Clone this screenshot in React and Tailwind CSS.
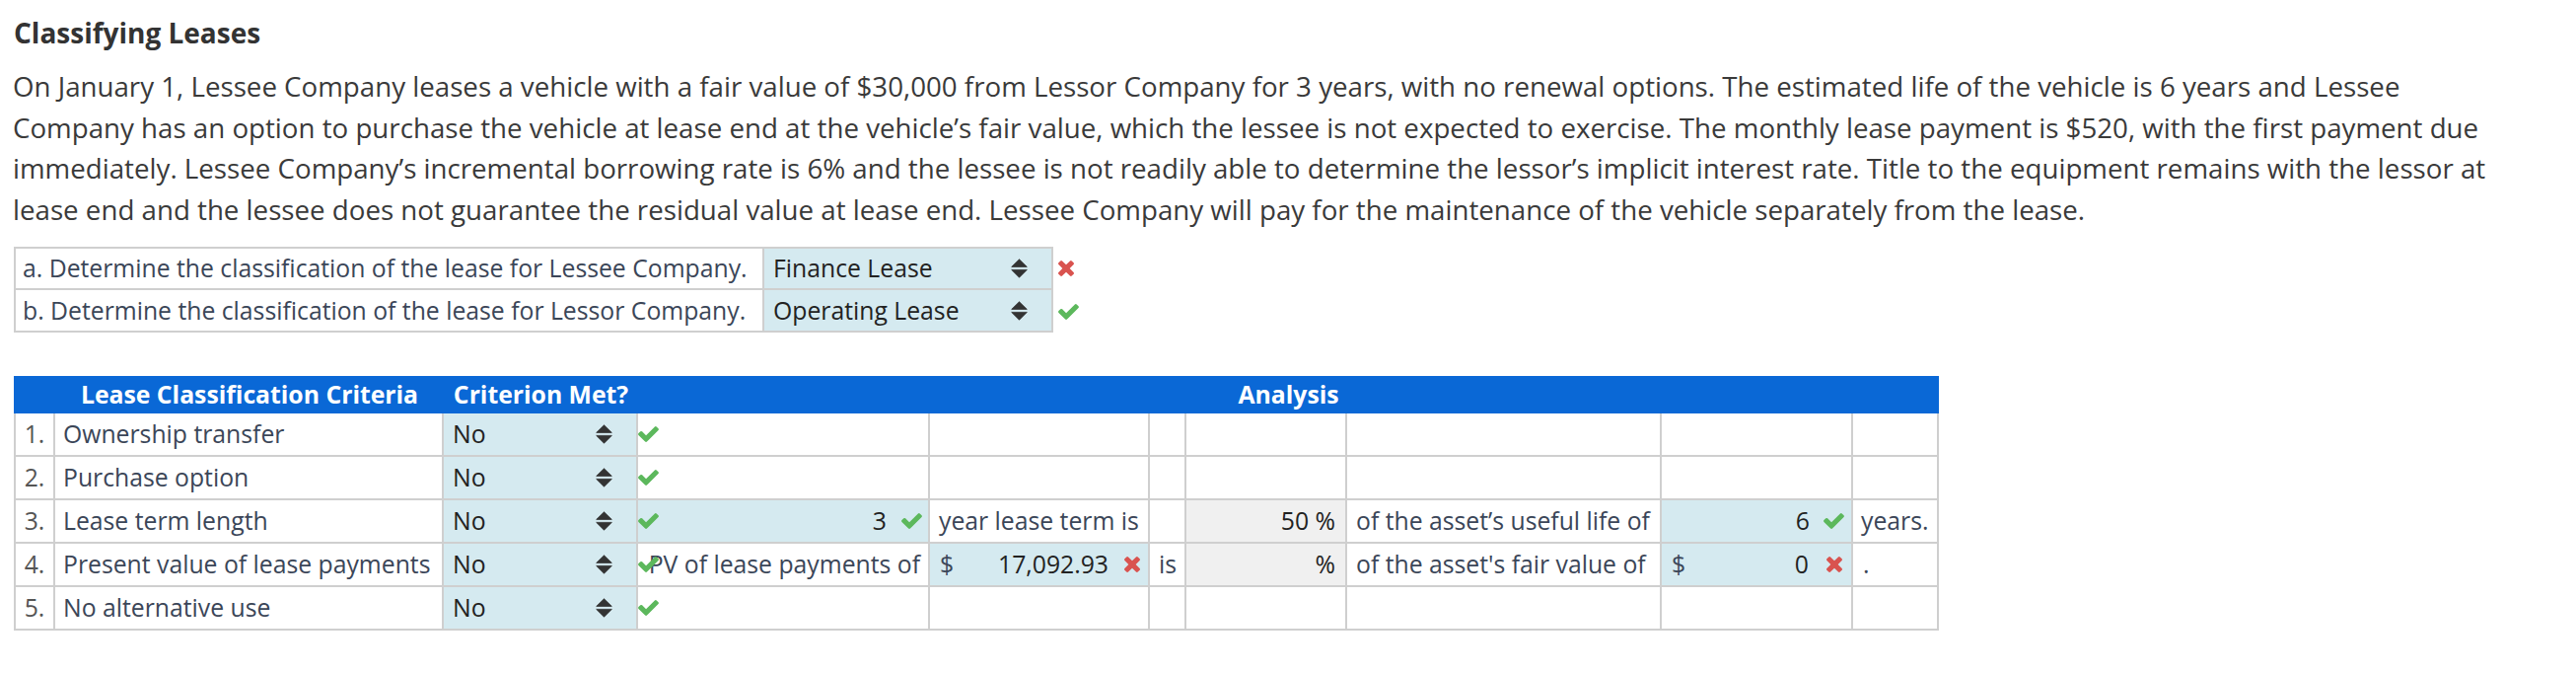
import React from "react";

// FontAwesome-style glyphs drawn inline
function SortIcon() {
  return (
    <svg width="17" height="20" viewBox="0 0 17 20" className="shrink-0">
      <path
        d="M8.5 0.8 L16.3 8.4 H0.7 Z M0.7 11.4 H16.3 L8.5 19.2 Z"
        fill="#333333"
        stroke="#333333"
        strokeWidth="0.8"
        strokeLinejoin="round"
      />
    </svg>
  );
}

function Check({ className = "" }) {
  return (
    <svg width="21" height="16" viewBox="121 334 1550 1188" className={className}>
      <path
        d="M1671 566q0 40-28 68l-724 724-136 136q-28 28-68 28t-68-28l-136-136-362-362q-28-28-28-68t28-68l136-136q28-28 68-28t68 28l294 295 656-657q28-28 68-28t68 28l136 136q28 28 28 68z"
        fill="#5cb85c"
      />
    </svg>
  );
}

function Cross({ className = "" }) {
  return (
    <svg width="16" height="16" viewBox="110 366 1188 1188" className={className}>
      <path
        d="M1298 1322q0 40-28 68l-136 136q-28 28-68 28t-68-28l-294-294-294 294q-28 28-68 28t-68-28l-136-136q-28-28-28-68t28-68l294-294-294-294q-28-28-28-68t28-68l136-136q28-28 68-28t68 28l294 294 294-294q28-28 68-28t68 28l136 136q28 28 28 68t-28 68l-294 294 294 294q28 28 28 68z"
        fill="#d9534f"
      />
    </svg>
  );
}

const td = "border-r-2 border-b-2 border-[#cfcfcf] h-[44px] p-0 align-middle";
const tdFirst = "border-l-2 border-r-2 border-b-2 border-[#cfcfcf] h-[44px] p-0 align-middle text-center text-[#555]";
const label = "text-[#3b4658]";

function SelectCell({ value }) {
  return (
    <td className={td + " relative bg-[#d5eaf0]"}>
      <div className="flex items-center justify-between pl-[9px] pr-[24px] text-[#222]">
        <span>{value}</span>
        <SortIcon />
      </div>
      <Check className="absolute left-[calc(100%+2px)] top-[13px]" />
    </td>
  );
}

function ABRow({ q, answer, ok }) {
  return (
    <tr>
      <td className={"border-l-2 border-r-2 border-b-2 border-[#cfcfcf] h-[43px] pl-[7px] " + label}>{q}</td>
      <td className="border-r-2 border-b-2 border-[#cfcfcf] bg-[#d5eaf0] h-[43px] p-0">
        <div className="flex items-center justify-between pl-[9px] pr-[24px] text-[#222]">
          <span>{answer}</span>
          <SortIcon />
        </div>
      </td>
      <td className="pl-[5px] align-middle">{ok ? <Check /> : <Cross />}</td>
    </tr>
  );
}

export default function App() {
  return (
    <div className="min-h-screen bg-white px-[14px] pt-[14px] font-['Open_Sans',sans-serif] text-[24.75px] text-[#3a3a3a]">
      <h1 className="font-bold text-[28px] leading-[38px] text-[#333]">Classifying Leases</h1>

      <p className="mt-[15px] w-[2542px] text-[27.7px] leading-[41.5px] -ml-[1px]">
        On January 1, Lessee Company leases a vehicle with a fair value of $30,000 from Lessor Company for 3 years, with
        no renewal options. The estimated life of the vehicle is 6 years and Lessee Company has an option to purchase the
        vehicle at lease end at the vehicle’s fair value, which the lessee is not expected to exercise. The monthly lease
        payment is $520, with the first payment due immediately. Lessee Company’s incremental borrowing rate is 6% and the
        lessee is not readily able to determine the lessor’s implicit interest rate. Title to the equipment remains with
        the lessor at lease end and the lessee does not guarantee the residual value at lease end. Lessee Company will pay
        for the maintenance of the vehicle separately from the lease.
      </p>

      <table className="mt-[17px] border-separate border-spacing-0 table-fixed">
        <colgroup>
          <col className="w-[761px]" />
          <col className="w-[293px]" />
          <col className="w-[40px]" />
        </colgroup>
        <tbody>
          <tr>
            <td className={"border-l-2 border-r-2 border-t-2 border-b-2 border-[#cfcfcf] h-[44px] pl-[7px] " + label}>
              a. Determine the classification of the lease for Lessee Company.
            </td>
            <td className="border-r-2 border-t-2 border-b-2 border-[#cfcfcf] bg-[#d5eaf0] h-[44px] p-0">
              <div className="flex items-center justify-between pl-[9px] pr-[24px] text-[#222]">
                <span>Finance Lease</span>
                <SortIcon />
              </div>
            </td>
            <td className="pl-[5px] align-middle">
              <Cross />
            </td>
          </tr>
          <ABRow q="b. Determine the classification of the lease for Lessor Company." answer="Operating Lease" ok />
        </tbody>
      </table>

      <table className="mt-[44px] border-separate border-spacing-0 table-fixed w-[1952px]">
        <colgroup>
          <col className="w-[42px]" />
          <col className="w-[394px]" />
          <col className="w-[197px]" />
          <col className="w-[296px]" />
          <col className="w-[223px]" />
          <col className="w-[37px]" />
          <col className="w-[163px]" />
          <col className="w-[319px]" />
          <col className="w-[194px]" />
          <col className="w-[87px]" />
        </colgroup>
        <thead>
          <tr className="bg-[#0a68d6] text-white font-bold">
            <th className="h-[38px] p-0"></th>
            <th className="h-[38px] p-0 text-center">Lease Classification Criteria</th>
            <th className="h-[38px] p-0 text-center">Criterion Met?</th>
            <th colSpan={7} className="h-[38px] p-0 text-center">
              Analysis
            </th>
          </tr>
        </thead>
        <tbody>
          <tr>
            <td className={tdFirst}>1.</td>
            <td className={td + " pl-[8px] " + label}>Ownership transfer</td>
            <SelectCell value="No" />
            <td className={td}></td>
            <td className={td}></td>
            <td className={td}></td>
            <td className={td}></td>
            <td className={td}></td>
            <td className={td}></td>
            <td className={td}></td>
          </tr>
          <tr>
            <td className={tdFirst}>2.</td>
            <td className={td + " pl-[8px] " + label}>Purchase option</td>
            <SelectCell value="No" />
            <td className={td}></td>
            <td className={td}></td>
            <td className={td}></td>
            <td className={td}></td>
            <td className={td}></td>
            <td className={td}></td>
            <td className={td}></td>
          </tr>
          <tr>
            <td className={tdFirst}>3.</td>
            <td className={td + " pl-[8px] " + label}>Lease term length</td>
            <SelectCell value="No" />
            <td className={td + " bg-[#d5eaf0]"}>
              <div className="flex items-center justify-end gap-[15px] pr-[6px] text-[#222]">
                <span>3</span>
                <Check />
              </div>
            </td>
            <td className={td + " pl-[9px] whitespace-nowrap " + label}>year lease term is</td>
            <td className={td}></td>
            <td className={td + " bg-[#f0f0f0] text-right pr-[10px] text-[#222]"}>50 %</td>
            <td className={td + " pl-[9px] whitespace-nowrap " + label}>of the asset’s useful life of</td>
            <td className={td + " bg-[#d5eaf0]"}>
              <div className="flex items-center justify-end gap-[14px] pr-[7px] text-[#222]">
                <span>6</span>
                <Check />
              </div>
            </td>
            <td className={td + " pl-[8px] whitespace-nowrap " + label}>years.</td>
          </tr>
          <tr>
            <td className={tdFirst}>4.</td>
            <td className={td + " pl-[8px] whitespace-nowrap " + label}>Present value of lease payments</td>
            <SelectCell value="No" />
            <td className={td + " text-right pr-[8px] whitespace-nowrap " + label}>PV of lease payments of</td>
            <td className={td + " bg-[#d5eaf0]"}>
              <div className="flex items-center pl-[10px] pr-[8px] text-[#222]">
                <span className="text-[#3b4658]">$</span>
                <span className="ml-auto">17,092.93</span>
                <Cross className="ml-[16px]" />
              </div>
            </td>
            <td className={td + " pl-[9px] " + label}>is</td>
            <td className={td + " bg-[#f0f0f0] text-right pr-[10px] text-[#222]"}>%</td>
            <td className={td + " pl-[9px] whitespace-nowrap " + label}>of the asset's fair value of</td>
            <td className={td + " bg-[#d5eaf0]"}>
              <div className="flex items-center pl-[10px] pr-[9px] text-[#222]">
                <span className="text-[#3b4658]">$</span>
                <span className="ml-auto">0</span>
                <Cross className="ml-[18px]" />
              </div>
            </td>
            <td className={td + " pl-[10px] " + label}>.</td>
          </tr>
          <tr>
            <td className={tdFirst}>5.</td>
            <td className={td + " pl-[8px] " + label}>No alternative use</td>
            <SelectCell value="No" />
            <td className={td}></td>
            <td className={td}></td>
            <td className={td}></td>
            <td className={td}></td>
            <td className={td}></td>
            <td className={td}></td>
            <td className={td}></td>
          </tr>
        </tbody>
      </table>
    </div>
  );
}
